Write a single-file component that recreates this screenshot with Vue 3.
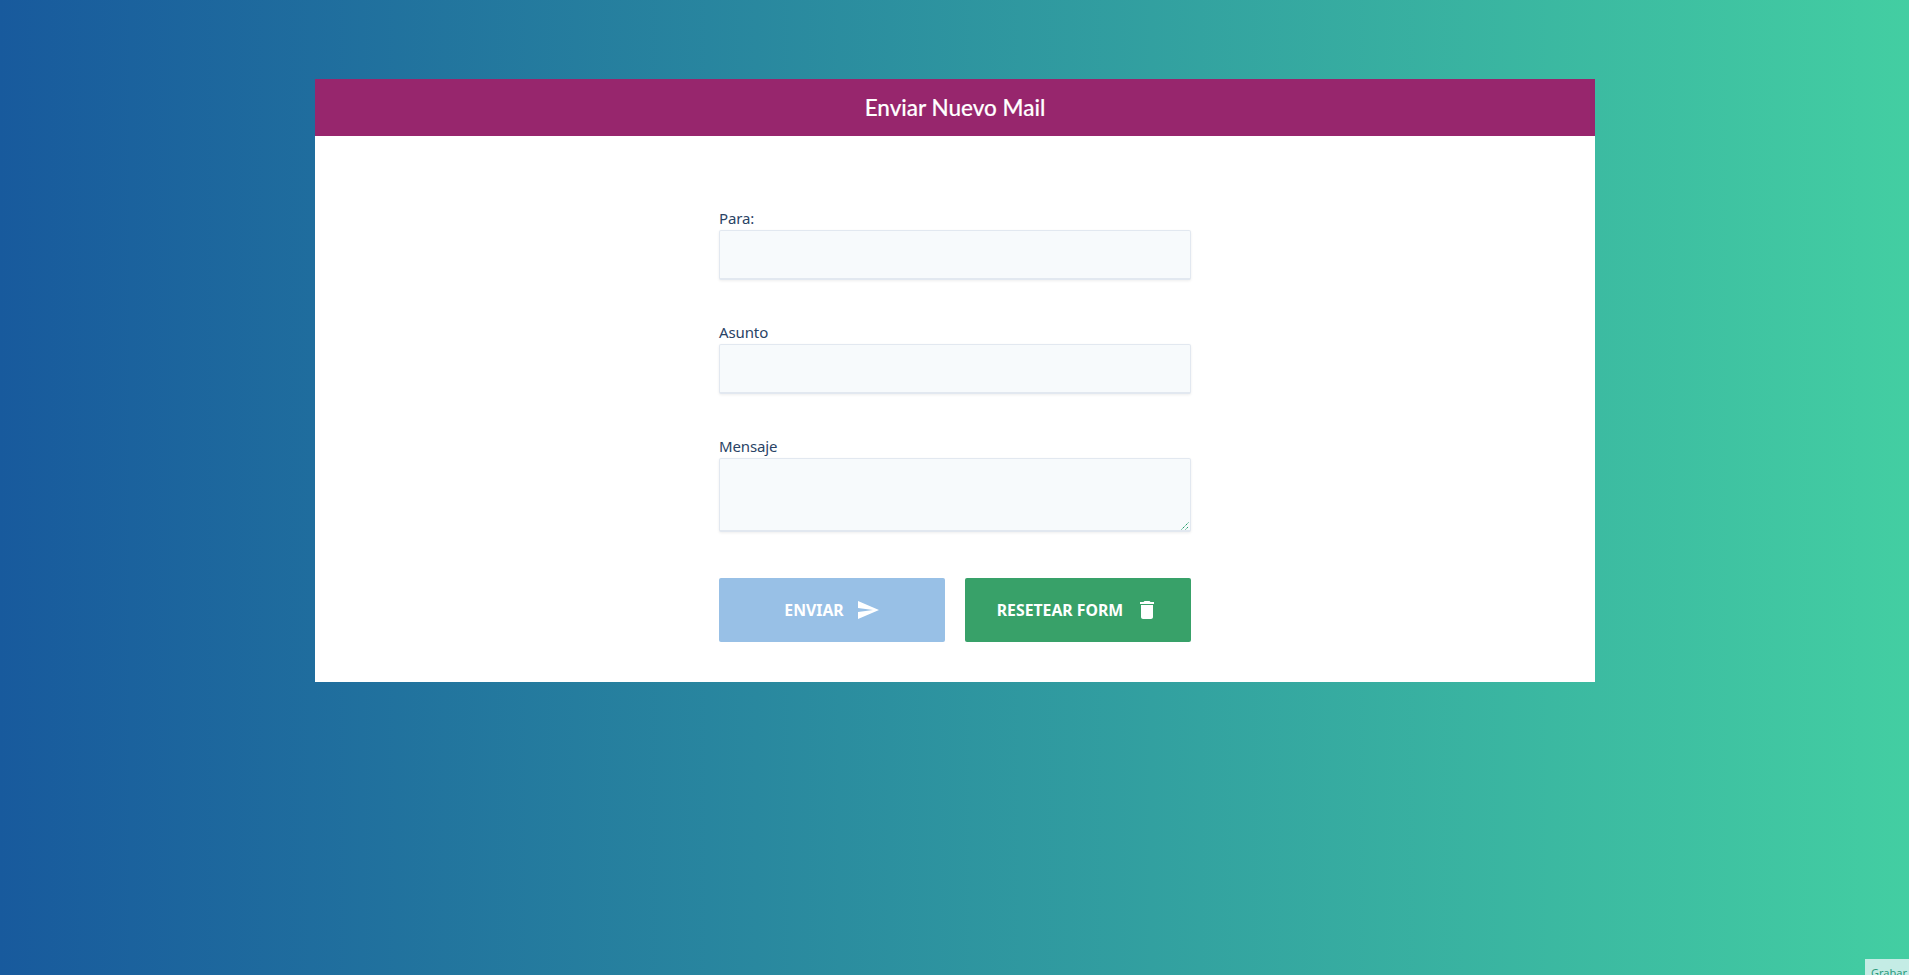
<template>
  <div class="page">
    <main class="card">
      <h1 class="title">Enviar Nuevo Mail</h1>
      <form class="form" @submit.prevent>
        <div class="field">
          <label for="para">Para:</label>
          <input id="para" v-model="para" type="text" />
        </div>
        <div class="field">
          <label for="asunto">Asunto</label>
          <input id="asunto" v-model="asunto" type="text" />
        </div>
        <div class="field field-text">
          <label for="mensaje">Mensaje</label>
          <textarea id="mensaje" v-model="mensaje"></textarea>
          <svg class="grip" width="8" height="8" viewBox="0 0 8 8">
            <path d="M0.5 7.5 7.5 0.5M4.5 7.5 7.5 4.5" stroke="#1f9d68" stroke-width="1" stroke-dasharray="1.41 0.7" fill="none" />
          </svg>
        </div>
        <div class="actions">
          <button type="submit" class="btn btn-send" disabled>
            ENVIAR
            <svg width="24" height="24" viewBox="0 0 24 24">
              <path d="M2.01 21 23 12 2.01 3 2 10l15 2-15 2z" fill="#fff" />
            </svg>
          </button>
          <button type="button" class="btn btn-reset" @click="reset">
            RESETEAR FORM
            <svg width="24" height="24" viewBox="0 0 24 24">
              <path d="M6 19c0 1.1.9 2 2 2h8c1.1 0 2-.9 2-2V7H6v12zM19 4h-3.5l-1-1h-5l-1 1H5v2h14V4z" fill="#fff" />
            </svg>
          </button>
        </div>
      </form>
    </main>
    <div class="badge">Grabar</div>
  </div>
</template>

<script setup>
import { ref } from "vue"

const para = ref("")
const asunto = ref("")
const mensaje = ref("")

const reset = () => {
  para.value = ""
  asunto.value = ""
  mensaje.value = ""
}
</script>

<style>
html,
body {
  margin: 0;
  overflow: hidden;
}
</style>

<style scoped>
.page {
  position: relative;
  height: 975px;
  padding-top: 79px;
  box-sizing: border-box;
  overflow: hidden;
  background: linear-gradient(to right, #185a9d, #43cea2);
  font-family: "Noto Sans", "Open Sans", sans-serif;
}

.card {
  width: 1280px;
  height: 603px;
  margin: 0 0 0 315px;
  background: #fff;
}

.title {
  margin: 0;
  height: 57px;
  line-height: 57px;
  background: #97266d;
  color: #fff;
  font-family: Lato, sans-serif;
  font-size: 22.5px;
  font-weight: 500;
  -webkit-text-stroke: 0.15px #fff;
  text-align: center;
}

.form {
  width: 472px;
  margin: 0 auto;
  padding-top: 72px;
}

.field {
  display: flex;
  flex-direction: column;
  margin-bottom: 42px;
}

.field-text {
  position: relative;
  margin-bottom: 46px;
}

label {
  height: 22px;
  line-height: 20px;
  font-size: 15px;
  letter-spacing: -0.12px;
  color: #2a4365;
}

input,
textarea {
  display: block;
  box-sizing: border-box;
  width: 100%;
  height: 50px;
  padding: 8px 12px;
  margin: 0;
  background: #f7fafc;
  border: 1px solid #e2e8f0;
  border-bottom-width: 2px;
  border-radius: 2px;
  box-shadow: 0 1px 3px rgba(0, 0, 0, 0.07);
  outline: none;
}

textarea {
  height: 74px;
  resize: none;
}

.grip {
  position: absolute;
  right: 2px;
  bottom: 2px;
}

.actions {
  display: flex;
  gap: 20px;
}

.btn {
  flex: 1;
  height: 64px;
  display: flex;
  align-items: center;
  justify-content: center;
  gap: 12px;
  padding: 0;
  border: none;
  border-radius: 2px;
  color: #fff;
  font-family: inherit;
  font-size: 15.8px;
  font-weight: 700;
  cursor: pointer;
}

.btn-send {
  background: #98c0e6;
  cursor: not-allowed;
}

.btn-reset {
  background: #38a169;
}

.badge {
  position: absolute;
  left: 1865px;
  top: 959px;
  width: 60px;
  height: 30px;
  padding: 6px 0 0 6px;
  box-sizing: border-box;
  background: #c4ece5;
  color: #2a9a7c;
  font-size: 11px;
}
</style>
